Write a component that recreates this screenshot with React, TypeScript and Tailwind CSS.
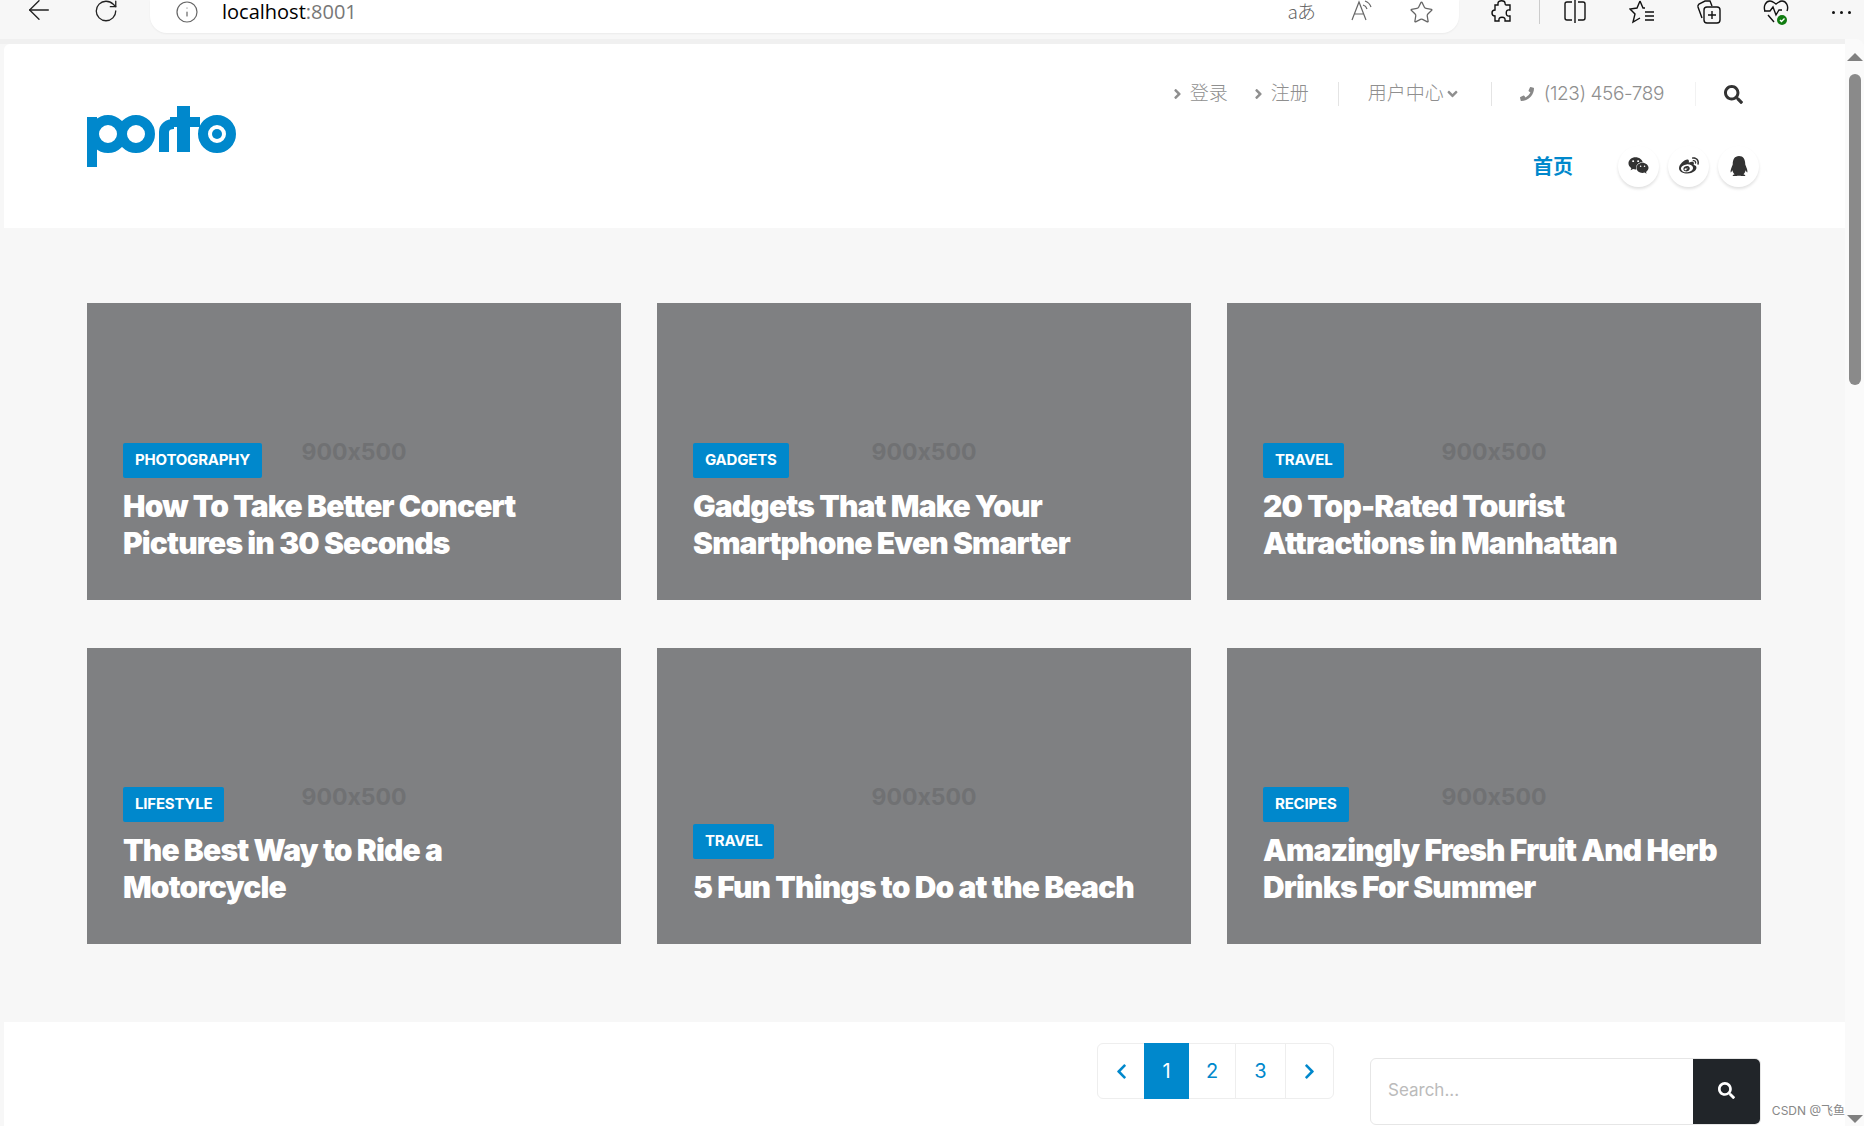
import { ArrowLeft, Info, RotateCw, Star } from "lucide-react";
import {
  FaAngleDown,
  FaAngleRight,
  FaChevronLeft,
  FaChevronRight,
  FaPhoneAlt,
  FaQq,
  FaSearch,
  FaWeibo,
  FaWeixin,
} from "react-icons/fa";

const posts = [
  { tag: "PHOTOGRAPHY", title: "How To Take Better Concert\nPictures in 30 Seconds" },
  { tag: "GADGETS", title: "Gadgets That Make Your\nSmartphone Even Smarter" },
  { tag: "TRAVEL", title: "20 Top-Rated Tourist\nAttractions in Manhattan" },
  { tag: "LIFESTYLE", title: "The Best Way to Ride a\nMotorcycle" },
  { tag: "TRAVEL", title: "5 Fun Things to Do at the Beach" },
  { tag: "RECIPES", title: "Amazingly Fresh Fruit And Herb\nDrinks For Summer" },
];

const Logo = () => (
  <svg width="150" height="61" viewBox="7 6 150 61" className="mt-[62px] shrink-0">
    <g fill="none" stroke="#0088cc" strokeWidth="10">
      <circle cx="28" cy="34" r="14" />
      <circle cx="56" cy="34" r="14" />
      <circle cx="137" cy="34" r="14" />
      <path d="M84 52V32c0-5 4-8 10-8" />
    </g>
    <rect x="7" y="17" width="10" height="50" fill="#0088cc" />
    <rect x="97" y="6" width="13" height="46" fill="#0088cc" />
    <rect x="90" y="17" width="30" height="10" fill="#0088cc" />
    <circle cx="137" cy="34" r="5" fill="#0088cc" />
  </svg>
);

const BrowserBar = () => (
  <div className="flex h-[39px] shrink-0 items-start text-[#222]">
    <ArrowLeft className="ml-[23px] h-[32px] w-[32px] -translate-y-[6px]" strokeWidth={1} />
    <RotateCw className="ml-[38px] h-[26px] w-[26px] -translate-y-[2px]" strokeWidth={1.2} />
    <div className="ml-[31px] flex h-[33px] w-[1309px] items-start rounded-b-[17px] bg-white shadow-[0_1px_2px_rgba(0,0,0,0.05)]">
      <Info className="ml-[25px] h-[24px] w-[24px] text-[#666]" strokeWidth={1.2} />
      <span className="ml-[23px] font-['Open_Sans',sans-serif] text-[20px] leading-[24px] text-black">
        localhost<span className="text-[#777]">:8001</span>
      </span>
      <span className="ml-auto -translate-x-[1px] font-['Noto_Sans_CJK_JP',sans-serif] text-[19px] leading-[22px] font-light tracking-[-1px] text-[#666]">aあ</span>
      <svg width="24" height="24" viewBox="0 0 24 24" fill="none" stroke="#666" strokeWidth="1.2" className="ml-[35px]">
        <path d="M1 20 8 2l7 18M3.500 14h9M14 1c3 1 5 3 6 6M12 5c2 .6 3.400 2 4 4" />
      </svg>
      <Star className="ml-[34px] h-[25px] w-[25px] text-[#666]" strokeWidth={1.2} />
      <div className="w-[25px]" />
    </div>
    <svg width="24" height="24" viewBox="0 0 24 24" fill="none" stroke="#111" strokeWidth="1.4" className="ml-[31px]">
      <path d="M8 3c0-3 7-3 7 0 0 1 0 2 1 2h4v5c-1 0-2-.5-3 .5s-1 4 0 5 2 .5 3 .5v5h-5c0-1 .5-2-.5-3s-4-1-5 0-.5 2-.5 3H5v-5c-2 0-3-1-3-3s1-3 3-3V5h3z" />
    </svg>
    <div className="ml-[25px] h-[24px] w-[1px] bg-[#ccc]" />
    <svg width="24" height="24" viewBox="0 0 24 24" fill="none" stroke="#111" strokeWidth="1.4" className="ml-[23px]">
      <path d="M9 2H4a2 2 0 0 0-2 2v14a2 2 0 0 0 2 2h5M15 2h5a2 2 0 0 1 2 2v14a2 2 0 0 1-2 2h-5M12 0v23" />
    </svg>
    <svg width="26" height="24" viewBox="0 0 26 24" fill="none" stroke="#111" strokeWidth="1.4" className="ml-[42px]">
      <path d="m11 1 3 7h2M11 1 8 8l-7 1 5 5-2 8 7-4M16 12h9M16 16h9M16 20h9" />
    </svg>
    <svg width="26" height="24" viewBox="0 0 26 24" fill="none" stroke="#111" strokeWidth="1.4" className="ml-[41px]">
      <path d="M6 18 2 7c-.4-1.400 0-2 1-3l6-3h5l2 5" />
      <rect x="8" y="7" width="16" height="16" rx="3" />
      <path d="M16 11v8M12 15h8" />
    </svg>
    <svg width="26" height="26" viewBox="0 0 26 26" fill="none" stroke="#111" strokeWidth="1.4" className="ml-[41px]">
      <path d="M2 11C0 6 3 1 7 1c3 0 4 2 6 3 2-1 3-3 6-3 4 0 7 5 5 10M1 11h6l3-4 3 8 3-5h3M5 15l6 7" />
      <circle cx="19" cy="20" r="5" fill="#107c10" stroke="none" />
      <path d="m17 20 1.500 1.500 3-3" stroke="#fff" />
    </svg>
    <div className="ml-[43px] flex h-[24px] items-center gap-[5px]">
      <span className="h-[3px] w-[3px] rounded-full bg-[#111]" />
      <span className="h-[3px] w-[3px] rounded-full bg-[#111]" />
      <span className="h-[3px] w-[3px] rounded-full bg-[#111]" />
    </div>
  </div>
);

const Header = () => (
  <header className="flex h-[184px] shrink-0 justify-between bg-white pr-[84px] pl-[83px]">
    <Logo />
    <div className="flex flex-col items-end">
      <div className="mt-[38px] flex h-[24px] items-center pr-[18px] text-[19px] font-light text-[#8f8f8f]">
        <FaAngleRight className="h-[16px] w-[9px]" />
        <span className="ml-[8px]">登录</span>
        <FaAngleRight className="ml-[26px] h-[16px] w-[9px]" />
        <span className="ml-[8px]">注册</span>
        <div className="ml-[29px] h-[24px] w-[1px] bg-[#e4e4e4]" />
        <span className="ml-[29px]">用户中心</span>
        <FaAngleDown className="ml-[2px] h-[16px] w-[13px]" />
        <div className="ml-[32px] h-[24px] w-[1px] bg-[#e4e4e4]" />
        <FaPhoneAlt className="ml-[28px] h-[14px] w-[14px] -scale-x-100 text-[#888]" />
        <span className="ml-[10px] tracking-[-0.4px]">(123) 456-789</span>
        <div className="ml-[31px] h-[24px] w-[1px] bg-[#f2f2f2]" />
        <FaSearch className="ml-[28px] h-[19px] w-[19px] text-[#333]" />
      </div>
      <div className="mt-[40px] flex items-center pr-[2px]">
        <span className="mr-[45px] text-[20px] font-bold text-[#0088cc]">首页</span>
        <div className="flex gap-[9px] text-[#333]">
          <div className="flex h-[41px] w-[41px] items-center justify-center rounded-full bg-white pb-[2px] shadow-[0_2px_3px_rgba(0,0,0,0.12)]">
            <FaWeixin className="h-[21px] w-[21px]" />
          </div>
          <div className="flex h-[41px] w-[41px] items-center justify-center rounded-full bg-white pb-[2px] shadow-[0_2px_3px_rgba(0,0,0,0.12)]">
            <FaWeibo className="h-[20px] w-[20px]" />
          </div>
          <div className="flex h-[41px] w-[41px] items-center justify-center rounded-full bg-white pb-[2px] shadow-[0_2px_3px_rgba(0,0,0,0.12)]">
            <FaQq className="h-[20px] w-[20px]" />
          </div>
        </div>
      </div>
    </div>
  </header>
);

const PostCard = ({ tag, title }: { tag: string; title: string }) => (
  <div className="relative flex h-[296.5px] flex-col items-start justify-end bg-[#7f8082] px-[36px] pb-[38px]">
    <span className="absolute top-[125px] left-0 w-full text-center text-[23px] leading-[48px] font-bold text-[#707173] [font-feature-settings:'calt'_0]">
      900x500
    </span>
    <span className="relative flex h-[35px] items-center rounded-[2px] bg-[#0088cc] px-[12px] text-[15px] font-bold tracking-[-0.2px] text-white">
      {tag}
    </span>
    <h3 className="relative mt-[10px] text-[30px] leading-[37px] font-black tracking-[-0.850px] whitespace-pre-line text-white">
      {title}
    </h3>
  </div>
);

const Pagination = () => (
  <div className="mt-[21px] flex h-[56px] items-stretch rounded-[6px] border border-[#eeeeee] text-[20px] text-[#0088cc]">
    <div className="flex w-[46px] items-center justify-center">
      <FaChevronLeft className="h-[17px] w-[13px]" />
    </div>
    <div className="-my-[1px] flex w-[45px] items-center justify-center bg-[#0088cc] text-white">1</div>
    <div className="flex w-[47px] items-center justify-center border-r border-[#eeeeee]">2</div>
    <div className="flex w-[50px] items-center justify-center border-r border-[#eeeeee]">3</div>
    <div className="flex w-[47px] items-center justify-center">
      <FaChevronRight className="h-[17px] w-[13px]" />
    </div>
  </div>
);

const SearchBox = () => (
  <div className="mt-[36px] ml-[36px] flex h-[67px] w-[391px] overflow-hidden rounded-[6px] border border-[#e6e6e6]">
    <div className="flex flex-1 items-center pb-[2px] pl-[17px] text-[17px] text-[#bbbbbb]">Search...</div>
    <div className="-my-[1px] flex w-[67px] items-center justify-center bg-[#212529] pb-[2px] text-white">
      <FaSearch className="h-[17px] w-[17px]" />
    </div>
  </div>
);

const Scrollbar = () => (
  <div className="flex w-[19px] shrink-0 flex-col items-center rounded-tr-[8px] bg-[#fafafa]">
    <div className="mt-[14px] h-0 w-0 border-x-[8px] border-b-[8px] border-x-transparent border-b-[#808080]" />
    <div className="mt-[13px] ml-[1px] h-[311px] w-[12px] rounded-full bg-[#8a8a8a]" />
    <div className="mt-auto mb-[3px] h-0 w-0 border-x-[8px] border-t-[8px] border-x-transparent border-t-[#808080]" />
  </div>
);

export default function App() {
  return (
    <div className="relative flex h-[1126px] w-[1864px] flex-col overflow-hidden bg-[#f7f7f7] font-['Inter','Noto_Sans_CJK_SC',sans-serif]">
      <BrowserBar />
      <div className="flex min-h-0 flex-1">
        <div className="flex min-w-0 flex-1 flex-col pl-[4px]">
          <div className="-ml-[4px] h-[5px] shrink-0 bg-[#f0f0f0]" />
          <div className="flex min-h-0 flex-1 flex-col overflow-hidden rounded-tl-[6px]">
            <Header />
            <main className="grid h-[794px] shrink-0 grid-cols-3 content-start gap-x-[36px] gap-y-[48px] bg-[#f7f7f7] pt-[75px] pr-[84px] pl-[83px]">
              {posts.map((post) => (
                <PostCard key={post.title} tag={post.tag} title={post.title} />
              ))}
            </main>
            <footer className="flex flex-1 items-start justify-end bg-white pr-[84px]">
              <Pagination />
              <SearchBox />
            </footer>
          </div>
        </div>
        <Scrollbar />
      </div>
      <span className="absolute right-[19px] bottom-[7px] bg-white/60 text-[12px] leading-[16px] text-[#888]">CSDN @飞鱼</span>
    </div>
  );
}
